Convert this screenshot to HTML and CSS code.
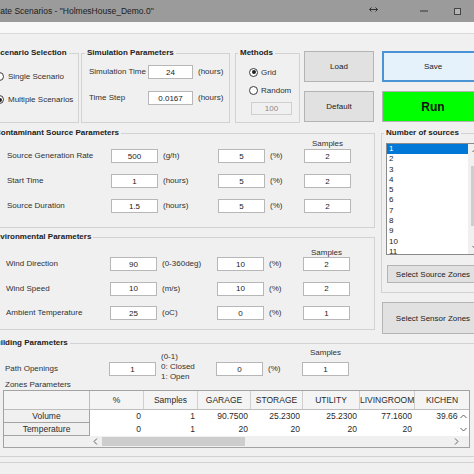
FILE: index.html
```html
<!DOCTYPE html>
<html lang="en">
<head>
  <meta charset="UTF-8">
  <meta name="viewport" content="width=device-width, initial-scale=1.0">
  <title>Simulate Scenarios</title>
  <link rel="stylesheet" href="styles.css">
</head>
<body>
  <div class="window">
    <div class="titlebar">
      <span class="title">Simulate Scenarios - "HolmesHouse_Demo.0"</span>
      <div class="win-ctrls">
        <svg class="ctl-resize" width="9" height="5" viewBox="0 0 9 5"><path d="M0.5 2.5H8.5M2.5 0.5L0.5 2.5L2.5 4.5M6.5 0.5L8.5 2.5L6.5 4.5" fill="none" stroke="#333" stroke-width="1"/></svg>
        <svg class="ctl-min" width="8" height="2" viewBox="0 0 8 2"><path d="M0 1H8" stroke="#333" stroke-width="1"/></svg>
        <svg class="ctl-max" width="7" height="7" viewBox="0 0 7 7"><rect x="0.5" y="0.5" width="6" height="6" fill="#b5b5b5" stroke="#444" stroke-width="1"/></svg>
      </div>
    </div>
    <div class="menubar"></div>

    <!-- top row -->
    <div class="top-row">
      <fieldset class="panel scenario">
        <legend>Scenario Selection</legend>
        <div class="panel-body">
          <label class="radio"><span class="dot"></span>Single Scenario</label>
          <label class="radio"><span class="dot on"></span>Multiple Scenarios</label>
        </div>
      </fieldset>

      <fieldset class="panel sim">
        <legend>Simulation Parameters</legend>
        <div class="panel-body sim-grid">
          <span class="plabel">Simulation Time</span>
          <input class="field" type="text" value="24">
          <span class="punit">(hours)</span>
          <span class="plabel">Time Step</span>
          <input class="field" type="text" value="0.0167">
          <span class="punit">(hours)</span>
        </div>
      </fieldset>

      <fieldset class="panel methods">
        <legend>Methods</legend>
        <div class="panel-body">
          <label class="radio"><span class="dot on"></span>Grid</label>
          <label class="radio"><span class="dot"></span>Random</label>
          <input class="field disabled" type="text" value="100" disabled>
        </div>
      </fieldset>

      <div class="btn-col">
        <button class="btn">Load</button>
        <button class="btn">Default</button>
      </div>
      <div class="btn-col wide">
        <button class="btn btn-save">Save</button>
        <button class="btn btn-run">Run</button>
      </div>
    </div>

    <!-- middle -->
    <div class="mid-row">
      <div class="left-col">
        <fieldset class="panel contam">
          <legend>Contaminant Source Parameters</legend>
          <div class="panel-body pgrid">
            <span class="samples-head">Samples</span>

            <span class="plabel">Source Generation Rate</span>
            <input class="field" type="text" value="500">
            <span class="punit">(g/h)</span>
            <input class="field" type="text" value="5">
            <span class="punit">(%)</span>
            <input class="field" type="text" value="2">

            <span class="plabel">Start Time</span>
            <input class="field" type="text" value="1">
            <span class="punit">(hours)</span>
            <input class="field" type="text" value="5">
            <span class="punit">(%)</span>
            <input class="field" type="text" value="2">

            <span class="plabel">Source Duration</span>
            <input class="field" type="text" value="1.5">
            <span class="punit">(hours)</span>
            <input class="field" type="text" value="5">
            <span class="punit">(%)</span>
            <input class="field" type="text" value="2">
          </div>
        </fieldset>

        <fieldset class="panel env">
          <legend>Environmental Parameters</legend>
          <div class="panel-body pgrid">
            <span class="samples-head">Samples</span>

            <span class="plabel">Wind Direction</span>
            <input class="field" type="text" value="90">
            <span class="punit">(0-360deg)</span>
            <input class="field" type="text" value="10">
            <span class="punit">(%)</span>
            <input class="field" type="text" value="2">

            <span class="plabel">Wind Speed</span>
            <input class="field" type="text" value="10">
            <span class="punit">(m/s)</span>
            <input class="field" type="text" value="10">
            <span class="punit">(%)</span>
            <input class="field" type="text" value="2">

            <span class="plabel">Ambient Temperature</span>
            <input class="field" type="text" value="25">
            <span class="punit">(oC)</span>
            <input class="field" type="text" value="0">
            <span class="punit">(%)</span>
            <input class="field" type="text" value="1">
          </div>
        </fieldset>
      </div>

      <div class="right-col">
        <fieldset class="panel sources">
          <legend>Number of sources</legend>
          <div class="panel-body">
            <div class="listbox">
              <div class="list-items">
                <div class="list-item selected">1</div>
                <div class="list-item">2</div>
                <div class="list-item">3</div>
                <div class="list-item">4</div>
                <div class="list-item">5</div>
                <div class="list-item">6</div>
                <div class="list-item">7</div>
                <div class="list-item">8</div>
                <div class="list-item">9</div>
                <div class="list-item">10</div>
                <div class="list-item">11</div>
              </div>
              <div class="list-scroll">
                <svg width="7" height="5" viewBox="0 0 7 5"><path d="M0.5 4L3.5 1L6.5 4" fill="none" stroke="#606060"/></svg>
                <div class="list-thumb"></div>
                <svg width="7" height="5" viewBox="0 0 7 5"><path d="M0.5 1L3.5 4L6.5 1" fill="none" stroke="#606060"/></svg>
              </div>
            </div>
            <button class="btn btn-source">Select Source Zones</button>
          </div>
        </fieldset>
        <button class="btn btn-sensor">Select Sensor Zones</button>
      </div>
    </div>

    <!-- building -->
    <fieldset class="panel building">
      <legend>Building Parameters</legend>
      <div class="panel-body">
        <div class="pgrid">
          <span class="samples-head">Samples</span>

          <span class="plabel">Path Openings</span>
          <input class="field" type="text" value="1">
          <div class="punit multi">
            <span>(0-1)</span>
            <span>0: Closed</span>
            <span>1: Open</span>
          </div>
          <input class="field" type="text" value="0">
          <span class="punit">(%)</span>
          <input class="field" type="text" value="1">
        </div>

        <div class="zones-label">Zones Parameters</div>

        <div class="ztable">
          <div class="zt-head">
            <div class="zt-corner"></div>
            <div class="zt-h c1">%</div>
            <div class="zt-h c2">Samples</div>
            <div class="zt-h c3">GARAGE</div>
            <div class="zt-h c4">STORAGE</div>
            <div class="zt-h c5">UTILITY</div>
            <div class="zt-h c6">LIVINGROOM</div>
            <div class="zt-h c7">KICHEN</div>
          </div>
          <div class="zt-body">
            <div class="zt-rowheads">
              <div class="zt-rh">Volume</div>
              <div class="zt-rh">Temperature</div>
            </div>
            <div class="zt-data">
              <div class="zt-row">
                <span class="zt-c c1">0</span>
                <span class="zt-c c2">1</span>
                <span class="zt-c c3">90.7500</span>
                <span class="zt-c c4">25.2300</span>
                <span class="zt-c c5">25.2300</span>
                <span class="zt-c c6">77.1600</span>
                <span class="zt-c c7">39.6600</span>
              </div>
              <div class="zt-row">
                <span class="zt-c c1">0</span>
                <span class="zt-c c2">1</span>
                <span class="zt-c c3">20</span>
                <span class="zt-c c4">20</span>
                <span class="zt-c c5">20</span>
                <span class="zt-c c6">20</span>
                <span class="zt-c c7">20</span>
              </div>
            </div>
            <div class="zt-vscroll">
              <svg width="7" height="5" viewBox="0 0 7 5"><path d="M0.5 4L3.5 1L6.5 4" fill="none" stroke="#606060"/></svg>
              <svg width="7" height="5" viewBox="0 0 7 5"><path d="M0.5 1L3.5 4L6.5 1" fill="none" stroke="#606060"/></svg>
            </div>
          </div>
          <div class="zt-hscroll">
            <div class="zt-hs-pad"></div>
            <div class="zt-hs-track">
              <svg width="5" height="7" viewBox="0 0 5 7"><path d="M4 0.5L1 3.5L4 6.5" fill="none" stroke="#606060"/></svg>
              <div class="zt-thumb"></div>
              <svg class="zt-next" width="5" height="7" viewBox="0 0 5 7"><path d="M1 0.5L4 3.5L1 6.5" fill="none" stroke="#606060"/></svg>
            </div>
          </div>
        </div>
      </div>
    </fieldset>
    <div class="bottom-line"></div>
  </div>
</body>
</html>
```

FILE: styles.css
```css
/* Global */
html, body {
  margin: 0;
  padding: 0;
}
body {
  width: 474px;
  height: 474px;
  overflow: hidden;
  background: #f0f0f0;
  font-family: "Liberation Sans", Arial, sans-serif;
  font-size: 8px;
  color: #303030;
}
.window {
  margin-left: -12px;
  width: 500px;
}

/* Title bar */
.titlebar {
  height: 22px;
  background: #9b9b9b;
  display: flex;
  align-items: center;
}
.title {
  margin-left: -9px;
  font-size: 8.5px;
  color: #1c1c1c;
  white-space: nowrap;
}
.win-ctrls {
  margin-left: auto;
  display: flex;
  align-items: center;
  padding-right: 27px;
}
.ctl-resize { margin-top: -3px; }
.ctl-min { margin-left: 42px; }
.ctl-max { margin-left: 26px; }
.menubar {
  height: 11px;
  background: #f8f8f8;
  border-bottom: 1px solid #d9d9d9;
}

/* Panels */
.panel {
  margin: 0;
  padding: 0;
  min-width: 0;
  box-sizing: border-box;
  border: 1px solid #d2d2d2;
}
.panel legend {
  font-weight: bold;
  font-size: 8px;
  line-height: 10px;
  padding: 0 2px;
  color: #222;
  white-space: nowrap;
}

/* Common controls */
.field {
  box-sizing: border-box;
  height: 14px;
  margin: 0;
  padding: 0;
  border: 1px solid #b7b7b7;
  background: #fff;
  font: inherit;
  color: #222;
  text-align: center;
  outline: none;
}
.field.disabled {
  background: #f0f0f0;
  border-color: #cfcfcf;
  color: #8a8a8a;
}
.btn {
  box-sizing: border-box;
  margin: 0;
  padding: 0;
  border: 1px solid #b4b4b4;
  background: #e1e1e1;
  font: inherit;
  color: #222;
  cursor: pointer;
}
.radio {
  display: flex;
  align-items: center;
  gap: 4px;
  white-space: nowrap;
}
.dot {
  box-sizing: border-box;
  width: 9px;
  height: 9px;
  border: 1px solid #3a3a3a;
  border-radius: 50%;
  background: #fff;
  display: flex;
  align-items: center;
  justify-content: center;
}
.dot.on::after {
  content: "";
  width: 4px;
  height: 4px;
  border-radius: 50%;
  background: #222;
}
.plabel {
  line-height: 14px;
  white-space: nowrap;
}
.punit {
  line-height: 14px;
  padding-left: 5px;
  white-space: nowrap;
}

/* Top row */
.top-row {
  margin-top: 14px;
  display: flex;
  align-items: flex-start;
}
.scenario {
  width: 91px;
  height: 75px;
}
.scenario legend { margin-left: 4px; }
.scenario .panel-body { padding: 7px 0 0 6px; }
.scenario .radio { height: 23px; }

.sim {
  width: 149px;
  height: 75px;
  margin-left: 2px;
}
.sim legend { margin-left: 3px; }
.sim-grid {
  padding: 1px 0 0 7px;
  display: grid;
  grid-template-columns: 59px 45px auto;
  grid-auto-rows: 26px;
  align-items: center;
}

.methods {
  width: 65px;
  height: 75px;
  margin-left: 5px;
}
.methods legend { margin-left: 2px; }
.methods .panel-body { padding: 5px 0 0 13px; }
.methods .radio { height: 18px; gap: 3px; }
.methods .field {
  width: 41px;
  height: 13px;
  margin: 3px 0 0 2px;
}

.btn-col {
  margin-left: 4px;
  width: 70px;
  padding-top: 3px;
  display: flex;
  flex-direction: column;
  gap: 9px;
}
.btn-col .btn { height: 31px; }
.btn-col.wide {
  margin-left: 8px;
  width: 102px;
}
.btn-save {
  background: #e5f1fb;
  border: 2px solid #4a93d4;
}
.btn-run {
  background: #00ff00;
  font-size: 12px;
  font-weight: bold;
  color: #111;
}

/* Middle */
.mid-row {
  margin-top: 5px;
  display: flex;
  align-items: flex-start;
}
.left-col { width: 387px; }
.pgrid {
  display: grid;
  grid-template-columns: 104px 47px 60px 47px 39px 47px;
  align-items: start;
}
.samples-head {
  grid-column: 6;
  text-align: center;
  line-height: 10px;
}
.contam { width: 387px; }
.contam legend { margin-left: 4px; }
.contam .pgrid {
  padding: 0 0 14px 18px;
  grid-template-rows: 11px 25px 25px 14px;
}
.contam .samples-head { align-self: center; }

.env {
  width: 392px;
  margin: 4px 0 0 -5px;
}
.env legend { margin-left: 4px; }
.env .pgrid {
  padding: 0 0 9px 22px;
  grid-template-rows: 15px 24.5px 24.5px 14px;
}
.env .samples-head {
  align-self: end;
  line-height: 8px;
}

.right-col {
  margin-left: 6px;
  width: 107px;
}
.sources { width: 107px; }
.sources legend { margin-left: 2px; }
.sources .panel-body { padding: 5px 0 9px 0; }
.listbox {
  box-sizing: border-box;
  margin-left: 4px;
  width: 97px;
  height: 112px;
  border: 1px solid #8a8a8a;
  background: #fff;
  display: flex;
  overflow: hidden;
}
.list-items { flex: 1; }
.list-item {
  height: 10.3px;
  line-height: 10.3px;
  padding-left: 2px;
  color: #222;
}
.list-item.selected {
  background: #0078d7;
  color: #fff;
}
.list-scroll {
  width: 14px;
  background: #f0f0f0;
  display: flex;
  flex-direction: column;
  align-items: center;
  padding: 4px 0;
  box-sizing: border-box;
}
.list-thumb {
  width: 9px;
  height: 60px;
  margin: 13px 0 auto;
  background: #cdcdcd;
}
.btn-source {
  margin: 10px 0 0 5px;
  width: 92px;
  height: 18px;
}
.btn-sensor {
  margin: 9px 0 0 1px;
  width: 102px;
  height: 32px;
}

/* Building */
.building {
  width: 505px;
  margin: 4px 0 0 -5px;
}
.building legend { margin-left: 4px; }
.building .panel-body { padding: 0 0 8px 21px; }
.building .pgrid { grid-template-rows: 14px 14px; }
.building .samples-head { align-self: start; }
.punit.multi {
  height: 14px;
  margin-top: -2px;
  display: flex;
  flex-direction: column;
  justify-content: center;
  line-height: 10px;
}
.zones-label {
  margin-top: 4px;
  line-height: 10px;
}

/* Zones table */
.ztable {
  margin-left: -2px;
  width: 467px;
  box-sizing: border-box;
  border: 1px solid #a3a3a3;
  background: #f0f0f0;
  overflow: hidden;
  font-size: 8.5px;
  color: #2a2a2a;
}
.zt-head {
  display: flex;
  height: 19px;
  border-bottom: 1px solid #bdbdbd;
  box-sizing: border-box;
  background: #f4f4f4;
}
.zt-corner {
  flex: none;
  width: 86px;
  border-right: 1px solid #bdbdbd;
  box-sizing: border-box;
}
.zt-h {
  flex: none;
  box-sizing: border-box;
  border-right: 1px solid #cfcfcf;
  text-align: center;
  line-height: 18px;
  white-space: nowrap;
}
.c1 { width: 54px; }
.c2 { width: 54px; }
.c3 { width: 53px; }
.c4 { width: 52px; }
.c5 { width: 57px; }
.c6 { width: 55px; }
.c7 { width: 55px; }
.zt-body {
  display: flex;
  height: 26px;
}
.zt-rowheads {
  flex: none;
  width: 86px;
}
.zt-rh {
  box-sizing: border-box;
  height: 13px;
  line-height: 12px;
  text-align: center;
  border-right: 1px solid #a3a3a3;
  border-bottom: 1px solid #a3a3a3;
}
.zt-data {
  flex: 1;
  background: #fff;
  overflow: hidden;
}
.zt-row {
  display: flex;
  height: 13px;
  line-height: 13px;
}
.zt-c {
  flex: none;
  box-sizing: border-box;
  text-align: right;
  padding-right: 3px;
  white-space: nowrap;
}
.zt-vscroll {
  flex: none;
  width: 11px;
  background: #fff;
  display: flex;
  flex-direction: column;
  justify-content: space-around;
  align-items: center;
}
.zt-hscroll {
  display: flex;
  height: 11px;
}
.zt-hs-pad {
  flex: none;
  width: 86px;
}
.zt-hs-track {
  flex: 1;
  display: flex;
  align-items: center;
  padding: 0 10px 0 3px;
}
.zt-thumb {
  width: 143px;
  height: 9px;
  margin-left: 4px;
  background: #cdcdcd;
}
.zt-next { margin-left: auto; }

.bottom-line {
  margin-top: 5px;
  border-top: 1px solid #d2d2d2;
}
```
